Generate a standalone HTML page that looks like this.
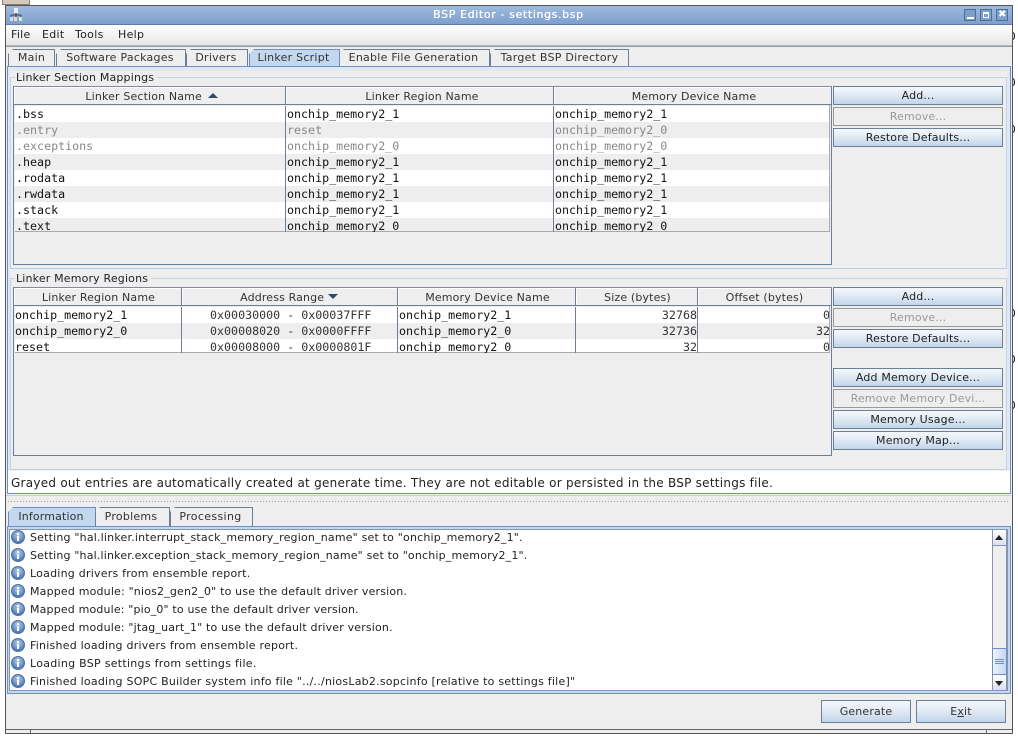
<!DOCTYPE html>
<html><head><meta charset="utf-8"><style>
html,body{margin:0;padding:0;background:#fff}
body{width:1018px;height:738px;position:relative;overflow:hidden;font-family:"DejaVu Sans","Liberation Sans",sans-serif;font-size:11px;color:#222}
.a{position:absolute;box-sizing:border-box}
.t{position:absolute;white-space:nowrap;line-height:16px}
.btn{position:absolute;box-sizing:border-box;left:833px;width:170px;height:19px;border:1px solid #6b7f96;background:linear-gradient(#f4f8fc 0,#e6eef7 35%,#c2d5ea 100%);text-align:center;line-height:17px;font-size:11px;color:#222;letter-spacing:.15px}
.btn.d{background:#eee;border-color:#999;color:#999}
.tab{position:absolute;box-sizing:border-box;height:18px;border:1px solid #6b7f96;border-bottom:0;background:#eee;text-align:center;line-height:15px;font-size:11px;color:#333;letter-spacing:.25px;clip-path:polygon(5px 0,100% 0,100% 100%,0 100%,0 5px)}
.tab.s{background:#c3d8ef;border-color:#6c8fc8}
.h{position:absolute;box-sizing:border-box;height:19px;border:1px solid #6b7f96;border-top-color:#889;background:#eee;text-align:center;line-height:19px;color:#333;font-size:11px;letter-spacing:.15px;box-shadow:inset 1px 1px 0 #fff}
.up,.dn{display:inline-block;width:0;height:0;border-left:5px solid transparent;border-right:5px solid transparent;margin-left:2px;vertical-align:2px}
.up{border-bottom:5px solid #2f4a66}
.dn{border-top:5px solid #2f4a66}
.row{position:absolute;height:16px}
.c{position:absolute;font-family:"DejaVu Sans Mono","Liberation Mono",monospace;font-size:11.67px;line-height:16px;white-space:pre;color:#111}
.g{color:#888}
.v{position:absolute;width:1px;background:#6b7f96}
.log{position:absolute;left:30px;font-size:11px;line-height:18px;white-space:nowrap;color:#222;letter-spacing:.23px}
.i{position:absolute;left:11px;width:14px;height:14px}
.ttl{position:absolute;background:#eee;padding:0 3px 0 1px;font-size:11px;line-height:14px;color:#222;letter-spacing:.17px}
.wb{position:absolute;top:9px;width:12px;height:12px;box-sizing:border-box;border:1px solid #4d6f96;background:#7e9fc8}
.d2{position:absolute;left:1013px;width:5px;font-family:"DejaVu Sans Mono",monospace;font-size:11px;line-height:12px;color:#111;overflow:hidden}
</style></head><body>

<!-- behind window -->
<div class="a" style="left:2px;top:0;width:28px;height:5px;background:#d8c8b8;border:1px solid #8a7a6a;border-top:0"></div>
<div class="d2" style="top:31px;text-indent:-4px">O</div>
<div class="d2" style="top:77px;text-indent:-4px">O</div>
<div class="d2" style="top:124px;text-indent:-4px">O</div>
<div class="d2" style="top:308px;text-indent:-4px">O</div>
<div class="d2" style="top:354px;text-indent:-4px">O</div>
<div class="d2" style="top:400px;text-indent:-4px">O</div>

<!-- window -->
<div class="a" style="left:5px;top:5px;width:1008px;height:729px;background:#eee;border:1px solid #555"></div>
<!-- title -->
<div class="a" style="left:6px;top:6px;width:1006px;height:19px;background:linear-gradient(#9dbae0,#7f9fcb);border-bottom:1px solid #5c7ba6"></div>
<svg class="a" style="left:9px;top:8px" width="14" height="14" viewBox="0 0 14 14"><rect x="5" y="0" width="4" height="5" fill="#eee"/><path d="M7 5v2M2 9V7h10v2M7 7v2" stroke="#345" fill="none"/><rect x="1" y="9" width="3" height="4" fill="#cde"/><rect x="5" y="9" width="3" height="4" fill="#fcc"/><rect x="10" y="9" width="3" height="4" fill="#cec"/></svg>
<div class="t" style="left:433px;top:6px;width:150px;text-align:center;color:#fff;font-size:11px;line-height:18px;letter-spacing:.62px;text-shadow:.3px 0 0 #fff">BSP Editor - settings.bsp</div>
<div class="wb" style="left:964px"><div class="a" style="left:2px;top:7px;width:7px;height:2px;background:#fff"></div></div>
<div class="wb" style="left:980px"><div class="a" style="left:2px;top:2px;width:6px;height:6px;border:1px solid #fff;border-top-width:2px"></div></div>
<div class="wb" style="left:996px"><div class="a" style="left:1px;top:-3px;color:#fff;font-size:10px;font-weight:bold;line-height:16px">✖</div></div>

<!-- menu -->
<div class="a" style="left:6px;top:25px;width:1006px;height:21px;background:linear-gradient(#fff,#e6e6e6);border-bottom:1px solid #bbb"></div>
<div class="t" style="left:11px;top:26px;font-size:11px;letter-spacing:.3px;line-height:17px">File</div>
<div class="t" style="left:42px;top:26px;font-size:11px;letter-spacing:.3px;line-height:17px">Edit</div>
<div class="t" style="left:75px;top:26px;font-size:11px;letter-spacing:.3px;line-height:17px">Tools</div>
<div class="t" style="left:118px;top:26px;font-size:11px;letter-spacing:.3px;line-height:17px">Help</div>
<div class="a" style="left:6px;top:46px;width:1006px;height:1px;background:#8b9bab"></div>

<!-- top tabs -->
<div class="tab" style="left:8px;top:49px;width:47px">Main</div>
<div class="tab" style="left:56px;top:49px;width:130px;padding-right:2px">Software Packages</div>
<div class="tab" style="left:186px;top:49px;width:62px;padding-right:2px">Drivers</div>
<div class="tab" style="left:339px;top:49px;width:151px;padding-right:2px">Enable File Generation</div>
<div class="tab" style="left:490px;top:49px;width:139px">Target BSP Directory</div>

<!-- main panel -->
<div class="a" style="left:7px;top:66px;width:1004px;height:428px;background:#eee;border:1px solid #6c8fc8"></div>
<div class="a" style="left:8px;top:67px;width:1002px;height:4px;background:#dfe8f3"></div>
<div class="a" style="left:8px;top:67px;width:2px;height:403px;background:#dfe8f3"></div>
<div class="a" style="left:1007px;top:67px;width:3px;height:403px;background:#dfe8f3"></div>
<div class="tab s" style="left:249px;top:49px;width:91px;height:18px;border:1px solid #6c8fc8;padding-right:2px">Linker Script</div>

<!-- Group 1 -->
<div class="a" style="left:10px;top:77px;width:997px;height:192px;border:1px solid #c3d3e6;border-bottom:1px solid #b8cde6"></div>
<div class="ttl" style="left:15px;top:71px">Linker Section Mappings</div>
<div class="a" style="left:13px;top:86px;width:819px;height:179px;border:1px solid #6b7f96;border-top:0"></div>
<div class="h" style="left:13px;top:86px;width:273px;padding-left:4px">Linker Section Name <span class="up"></span></div>
<div class="h" style="left:285px;top:86px;width:269px;padding-left:5px">Linker Region Name</div>
<div class="h" style="left:553px;top:86px;width:279px;padding-left:3px">Memory Device Name</div>
<div class="row" style="left:15px;top:106px;width:815px;background:#fff"></div>
<div class="row" style="left:15px;top:122px;width:815px;background:#eee"></div>
<div class="row" style="left:15px;top:138px;width:815px;background:#fff"></div>
<div class="row" style="left:15px;top:154px;width:815px;background:#eee"></div>
<div class="row" style="left:15px;top:170px;width:815px;background:#fff"></div>
<div class="row" style="left:15px;top:186px;width:815px;background:#eee"></div>
<div class="row" style="left:15px;top:202px;width:815px;background:#fff"></div>
<div class="row" style="left:15px;top:218px;width:815px;height:14px;background:#eee;border-bottom:1px solid #aaa;box-sizing:border-box"></div>
<div class="a" style="left:15px;top:106px;width:815px;height:126px;overflow:hidden">
<div class="c" style="left:1px;top:0">.bss</div><div class="c" style="left:272px;top:0">onchip_memory2_1</div><div class="c" style="left:540px;top:0">onchip_memory2_1</div>
<div class="c g" style="left:1px;top:16px">.entry</div><div class="c g" style="left:272px;top:16px">reset</div><div class="c g" style="left:540px;top:16px">onchip_memory2_0</div>
<div class="c g" style="left:1px;top:32px">.exceptions</div><div class="c g" style="left:272px;top:32px">onchip_memory2_0</div><div class="c g" style="left:540px;top:32px">onchip_memory2_0</div>
<div class="c" style="left:1px;top:48px">.heap</div><div class="c" style="left:272px;top:48px">onchip_memory2_1</div><div class="c" style="left:540px;top:48px">onchip_memory2_1</div>
<div class="c" style="left:1px;top:64px">.rodata</div><div class="c" style="left:272px;top:64px">onchip_memory2_1</div><div class="c" style="left:540px;top:64px">onchip_memory2_1</div>
<div class="c" style="left:1px;top:80px">.rwdata</div><div class="c" style="left:272px;top:80px">onchip_memory2_1</div><div class="c" style="left:540px;top:80px">onchip_memory2_1</div>
<div class="c" style="left:1px;top:96px">.stack</div><div class="c" style="left:272px;top:96px">onchip_memory2_1</div><div class="c" style="left:540px;top:96px">onchip_memory2_1</div>
<div class="c" style="left:1px;top:112px">.text</div><div class="c" style="left:272px;top:112px">onchip_memory2_0</div><div class="c" style="left:540px;top:112px">onchip_memory2_0</div>
</div>
<div class="v" style="left:285px;top:106px;height:126px"></div>
<div class="v" style="left:553px;top:106px;height:126px"></div>
<div class="a" style="left:829px;top:105px;width:1px;height:127px;background:#aaa"></div>

<div class="btn" style="top:86px">Add...</div>
<div class="btn d" style="top:107px">Remove...</div>
<div class="btn" style="top:128px">Restore Defaults...</div>

<!-- Group 2 -->
<div class="a" style="left:10px;top:278px;width:997px;height:192px;border:1px solid #c3d3e6"></div>
<div class="ttl" style="left:15px;top:272px">Linker Memory Regions</div>
<div class="a" style="left:13px;top:287px;width:819px;height:169px;border:1px solid #6b7f96;border-top:0"></div>
<div class="h" style="left:13px;top:287px;width:169px;padding-left:2px">Linker Region Name</div>
<div class="h" style="left:181px;top:287px;width:217px;padding-right:1px">Address Range <span class="dn" style="margin-left:0"></span></div>
<div class="h" style="left:397px;top:287px;width:180px;padding-left:1px">Memory Device Name</div>
<div class="h" style="left:575px;top:287px;width:123px;padding-left:2px">Size (bytes)</div>
<div class="h" style="left:697px;top:287px;width:135px">Offset (bytes)</div>
<div class="row" style="left:15px;top:307px;width:815px;background:#fff"></div>
<div class="row" style="left:15px;top:323px;width:815px;background:#eee"></div>
<div class="row" style="left:15px;top:339px;width:815px;height:14px;background:#fff;border-bottom:1px solid #aaa;box-sizing:border-box"></div>
<div class="a" style="left:15px;top:307px;width:815px;height:46px;overflow:hidden">
<div class="c" style="left:0;top:0">onchip_memory2_1</div><div class="c g" style="left:195px;top:0;color:#333">0x00030000 - 0x00037FFF</div><div class="c" style="left:384px;top:0">onchip_memory2_1</div><div class="c" style="right:133px;top:0;color:#333">32768</div><div class="c" style="right:0;top:0;color:#333">0</div>
<div class="c" style="left:0;top:16px">onchip_memory2_0</div><div class="c" style="left:195px;top:16px;color:#333">0x00008020 - 0x0000FFFF</div><div class="c" style="left:384px;top:16px">onchip_memory2_0</div><div class="c" style="right:133px;top:16px;color:#333">32736</div><div class="c" style="right:0;top:16px;color:#333">32</div>
<div class="c" style="left:0;top:32px">reset</div><div class="c" style="left:195px;top:32px;color:#333">0x00008000 - 0x0000801F</div><div class="c" style="left:384px;top:32px">onchip_memory2_0</div><div class="c" style="right:133px;top:32px;color:#333">32</div><div class="c" style="right:0;top:32px;color:#333">0</div>
</div>
<div class="v" style="left:181px;top:307px;height:46px"></div>
<div class="v" style="left:397px;top:307px;height:46px"></div>
<div class="v" style="left:575px;top:307px;height:46px"></div>
<div class="v" style="left:697px;top:307px;height:46px"></div>
<div class="a" style="left:829px;top:306px;width:1px;height:47px;background:#aaa"></div>

<div class="btn" style="top:287px">Add...</div>
<div class="btn d" style="top:308px">Remove...</div>
<div class="btn" style="top:329px">Restore Defaults...</div>
<div class="btn" style="top:368px">Add Memory Device...</div>
<div class="btn d" style="top:389px">Remove Memory Devi...</div>
<div class="btn" style="top:410px">Memory Usage...</div>
<div class="btn" style="top:431px">Memory Map...</div>

<!-- Notice -->
<div class="a" style="left:8px;top:471px;width:1002px;height:22px;background:#fff"></div>
<div class="t" style="left:11px;top:475px;font-size:12px;letter-spacing:.26px;color:#222">Grayed out entries are automatically created at generate time. They are not editable or persisted in the BSP settings file.</div>

<!-- splitter -->
<div class="a" style="left:6px;top:495px;width:1005px;height:11px;background:#eee;border-top:1px solid #ccc"></div>
<div class="a" style="left:7px;top:500px;width:1003px;height:3px;background-image:radial-gradient(#9aa 0.7px,transparent .8px);background-size:3px 3px"></div>

<!-- log -->
<div class="a" style="left:7px;top:526px;width:1004px;height:168px;background:#c3d8ef;border:1px solid #6c8fc8"></div>
<div class="a" style="left:9px;top:529px;width:999px;height:162px;background:#fff;border:1px solid #8496ad"></div>
<div class="tab s" style="left:8px;top:507px;width:88px;height:20px;border:1px solid #6c8fc8;line-height:17px;letter-spacing:.15px;padding-right:2px">Information</div>
<div class="tab" style="left:95px;top:507px;width:75px;height:19px;line-height:17px;padding-right:3px">Problems</div>
<div class="tab" style="left:170px;top:507px;width:83px;height:19px;line-height:17px;letter-spacing:.35px;padding-right:2px">Processing</div>

<svg width="0" height="0" style="position:absolute"><defs><radialGradient id="ig" cx="50%" cy="35%" r="70%"><stop offset="0" stop-color="#b8d0f0"/><stop offset="1" stop-color="#2f67b0"/></radialGradient><symbol id="ic" viewBox="0 0 14 14"><circle cx="7" cy="7" r="6.5" fill="url(#ig)" stroke="#56719a"/><rect x="6" y="3" width="2" height="2" fill="#fff"/><rect x="6" y="6" width="2" height="5" fill="#fff"/></symbol></defs></svg>
<svg class="i" style="top:530px"><use href="#ic"/></svg><div class="log" style="top:529px;letter-spacing:.19px">Setting "hal.linker.interrupt_stack_memory_region_name" set to "onchip_memory2_1".</div>
<svg class="i" style="top:548px"><use href="#ic"/></svg><div class="log" style="top:547px;letter-spacing:.18px">Setting "hal.linker.exception_stack_memory_region_name" set to "onchip_memory2_1".</div>
<svg class="i" style="top:566px"><use href="#ic"/></svg><div class="log" style="top:565px">Loading drivers from ensemble report.</div>
<svg class="i" style="top:584px"><use href="#ic"/></svg><div class="log" style="top:583px;letter-spacing:.18px">Mapped module: "nios2_gen2_0" to use the default driver version.</div>
<svg class="i" style="top:602px"><use href="#ic"/></svg><div class="log" style="top:601px;letter-spacing:.16px">Mapped module: "pio_0" to use the default driver version.</div>
<svg class="i" style="top:620px"><use href="#ic"/></svg><div class="log" style="top:619px;letter-spacing:.17px">Mapped module: "jtag_uart_1" to use the default driver version.</div>
<svg class="i" style="top:638px"><use href="#ic"/></svg><div class="log" style="top:637px">Finished loading drivers from ensemble report.</div>
<svg class="i" style="top:656px"><use href="#ic"/></svg><div class="log" style="top:655px;letter-spacing:.28px">Loading BSP settings from settings file.</div>
<svg class="i" style="top:674px"><use href="#ic"/></svg><div class="log" style="top:673px">Finished loading SOPC Builder system info file "../../niosLab2.sopcinfo [relative to settings file]"</div>

<!-- scrollbar -->
<div class="a" style="left:992px;top:530px;width:15px;height:160px;background:#eee;border-left:1px solid #8496ad;border-right:1px solid #8496ad"></div>
<div class="a" style="left:993px;top:530px;width:13px;height:16px;background:linear-gradient(#fff,#dde);border-bottom:1px solid #8496ad"></div>
<svg class="a" style="left:994px;top:534px" width="10" height="7"><path d="M1 6L5 1L9 6Z" fill="#222"/></svg>
<div class="a" style="left:992px;top:648px;width:15px;height:27px;background:linear-gradient(90deg,#eef4fb,#c3d8ef);border:1px solid #6c8fc8"></div>
<div class="a" style="left:995px;top:659px;width:9px;height:5px;border-top:1px solid #6c8fc8;border-bottom:1px solid #6c8fc8"></div>
<div class="a" style="left:995px;top:661px;width:9px;height:1px;background:#6c8fc8"></div>
<div class="a" style="left:993px;top:675px;width:13px;height:15px;background:linear-gradient(#fff,#dde)"></div>
<svg class="a" style="left:994px;top:680px" width="10" height="7"><path d="M1 1L5 6L9 1Z" fill="#222"/></svg>

<!-- bottom buttons -->
<div class="btn" style="left:821px;top:700px;width:90px;height:23px;line-height:21px;color:#333">Generate</div>
<div class="btn" style="left:916px;top:700px;width:90px;height:23px;line-height:21px;color:#333">E<span style="text-decoration:underline">x</span>it</div>

<!-- status bar -->
<div class="a" style="left:6px;top:729px;width:1006px;height:1px;background:#666"></div>
<div class="a" style="left:30px;top:729px;width:1px;height:4px;background:#666"></div>
<div class="a" style="left:986px;top:729px;width:1px;height:4px;background:#666"></div>
</body></html>
